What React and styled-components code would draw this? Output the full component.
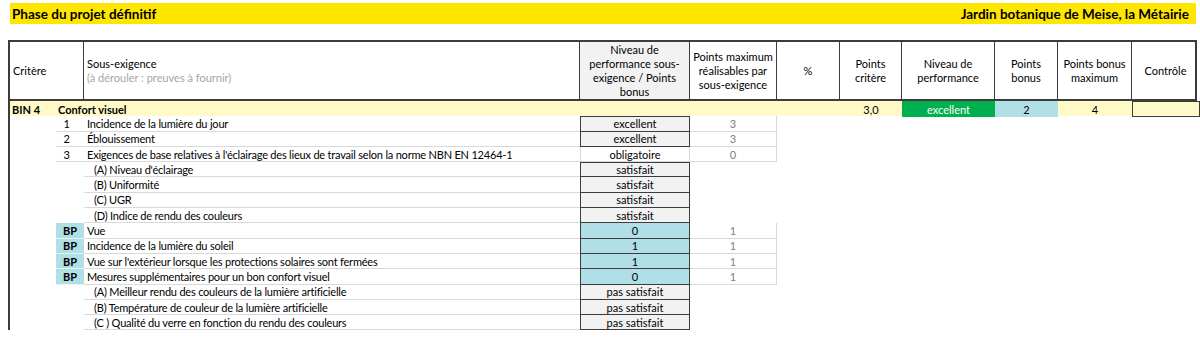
import styled, { createGlobalStyle } from "styled-components";

const COLS = "46px 28px 496px 110px 87px 63px 62px 93px 63px 74px 67px";
const DARK = "#3c3c3c";
const LIGHT = "#d9d9d9";

const GlobalStyle = createGlobalStyle`
  body {
    margin: 0;
    background: #fff;
    font-family: Lato, "Liberation Sans", sans-serif;
    font-size: 11px;
    color: #000;
  }
`;

const Page = styled.div`
  width: 1200px;
  height: 339px;
  overflow: hidden;
`;

const TitleBar = styled.div`
  display: flex;
  justify-content: space-between;
  align-items: center;
  margin: 3px 4px 0 10px;
  height: 21px;
  padding: 0 7px 0 2px;
  background: #ffe600;
  font-size: 13.5px;
  font-weight: 700;
`;

const Table = styled.div`
  margin: 16px 3px 0 8px;
  border-left: 2px solid ${DARK};
`;

const HeaderRow = styled.div`
  display: grid;
  grid-template-columns: ${COLS};
  height: 61px;
  box-sizing: border-box;
  border-top: 2px solid ${DARK};
  border-bottom: 2px solid ${DARK};
  border-right: 2px solid ${DARK};
  margin-left: -2px;
  padding-left: 2px;
`;

const HeadCell = styled.div`
  display: flex;
  flex-direction: column;
  justify-content: center;
  align-items: ${(p) => (p.$left ? "flex-start" : "center")};
  text-align: ${(p) => (p.$left ? "left" : "center")};
  padding: 0 3px;
  line-height: 14px;
  grid-column: ${(p) => p.$span || "auto"};
  background: ${(p) => p.$bg || "transparent"};
  border-right: ${(p) => (p.$last ? "none" : `1px solid ${DARK}`)};
`;

const Hint = styled.span`
  color: #a6a6a6;
`;

const Row = styled.div`
  display: grid;
  grid-template-columns: ${COLS};
  height: 15.3px;
  background: ${(p) => p.$bg || "transparent"};
  box-sizing: border-box;
`;

const Cell = styled.div`
  box-sizing: border-box;
  display: flex;
  align-items: center;
  justify-content: ${(p) =>
    p.$align === "center" ? "center" : p.$align === "right" ? "flex-end" : "flex-start"};
  padding: 0 ${(p) => p.$pr ?? 2}px 0 ${(p) => p.$pl ?? 2}px;
  grid-column: ${(p) => p.$span || "auto"};
  font-weight: ${(p) => (p.$bold ? 700 : 400)};
  letter-spacing: ${(p) => (p.$tight ? "-0.2px" : "normal")};
  color: ${(p) => p.$color || "#000"};
  background: ${(p) => p.$bg || "transparent"};
  border-bottom: ${(p) => (p.$line ? `1px solid ${p.$line}` : "none")};
  border-top: ${(p) => (p.$top ? `1px solid ${p.$top}` : "none")};
  border-left: ${(p) => (p.$side ? `1px solid ${p.$side}` : "none")};
  border-right: ${(p) => (p.$side || p.$right ? `1px solid ${p.$side || p.$right}` : "none")};
  white-space: nowrap;
  line-height: 1;
`;

const ControlBox = styled.div`
  box-sizing: border-box;
  background: #fffac8;
  border: 1px solid ${DARK};
  border-right-width: 2px;
  margin-right: -2px;
  height: 16px;
`;

const rows = [
  { num: "1", text: "Incidence de la lumière du jour", level: "excellent", kind: "gray", pts: "3", first: true },
  { num: "2", text: "Éblouissement", level: "excellent", kind: "gray", pts: "3" },
  { num: "3", text: "Exigences de base relatives à l'éclairage des lieux de travail selon la norme NBN EN 12464-1", level: "obligatoire", kind: "plain", pts: "0" },
  { sub: true, text: "(A) Niveau d'éclairage", level: "satisfait", kind: "gray", first: true },
  { sub: true, text: "(B) Uniformité", level: "satisfait", kind: "gray" },
  { sub: true, text: "(C) UGR", level: "satisfait", kind: "gray" },
  { sub: true, text: "(D) Indice de rendu des couleurs", level: "satisfait", kind: "gray" },
  { bp: true, text: "Vue", level: "0", kind: "blue", pts: "1" },
  { bp: true, text: "Incidence de la lumière du soleil", level: "1", kind: "blue", pts: "1" },
  { bp: true, text: "Vue sur l'extérieur lorsque les protections solaires sont fermées", level: "1", kind: "blue", pts: "1" },
  { bp: true, text: "Mesures supplémentaires pour un bon confort visuel", level: "0", kind: "blue", pts: "1" },
  { sub: true, text: "(A) Meilleur rendu des couleurs de la lumière artificielle", level: "pas satisfait", kind: "gray" },
  { sub: true, text: "(B) Température de couleur de la lumière artificielle", level: "pas satisfait", kind: "gray" },
  { sub: true, text: "(C ) Qualité du verre en fonction du rendu des couleurs", level: "pas satisfait", kind: "gray" },
];

const levelBg = { gray: "#f2f2f2", blue: "#b0dfe8", plain: "#fff" };

const SubRow = ({ r }) => {
  const dark = r.kind !== "plain";
  return (
    <Row>
      <Cell />
      <Cell
        $align="right"
        $pr={r.bp ? 7 : 14}
        $bold={r.bp}
        $bg={r.bp ? "#b0dfe8" : "transparent"}
        $line={r.sub ? null : r.bp ? "#e6f4f7" : LIGHT}
      >
        {r.bp ? "BP" : r.num}
      </Cell>
      <Cell $pl={r.sub ? 10 : 3} $line={LIGHT} $tight>
        {r.text}
      </Cell>
      <Cell
        $align="center"
        $bg={levelBg[r.kind]}
        $side={dark ? DARK : LIGHT}
        $line={dark ? DARK : LIGHT}
        $top={r.first ? DARK : null}
      >
        {r.level}
      </Cell>
      <Cell $align="center" $color="#808080" $line={r.pts ? LIGHT : null} $right={r.pts ? LIGHT : null}>
        {r.pts || ""}
      </Cell>
    </Row>
  );
};

export default function App() {
  return (
    <Page>
      <GlobalStyle />
      <TitleBar>
        <span>Phase du projet définitif</span>
        <span>Jardin botanique de Meise, la Métairie</span>
      </TitleBar>

      <Table>
        <HeaderRow>
          <HeadCell $left $span="span 2">Critère</HeadCell>
          <HeadCell $left>
            <span>Sous-exigence</span>
            <Hint>(à dérouler : preuves à fournir)</Hint>
          </HeadCell>
          <HeadCell $bg="#f2f2f2">
            Niveau de<br />performance sous-<br />exigence / Points<br />bonus
          </HeadCell>
          <HeadCell>
            Points maximum<br />réalisables par<br />sous-exigence
          </HeadCell>
          <HeadCell>%</HeadCell>
          <HeadCell>
            Points<br />critère
          </HeadCell>
          <HeadCell>
            Niveau de<br />performance
          </HeadCell>
          <HeadCell>
            Points<br />bonus
          </HeadCell>
          <HeadCell>
            Points bonus<br />maximum
          </HeadCell>
          <HeadCell $last>Contrôle</HeadCell>
        </HeaderRow>

        <Row $bg="#fffac8">
          <Cell $bold $pl={2}>BIN 4</Cell>
          <Cell $bold $span="span 4">Confort visuel</Cell>
          <Cell />
          <Cell $align="center">3,0</Cell>
          <Cell $align="center" $bg="#00b050" $color="#fff">excellent</Cell>
          <Cell $align="center" $bg="#b0dfe8">2</Cell>
          <Cell $align="center">4</Cell>
          <ControlBox />
        </Row>

        {rows.map((r, i) => (
          <SubRow key={i} r={r} />
        ))}
      </Table>
    </Page>
  );
}
